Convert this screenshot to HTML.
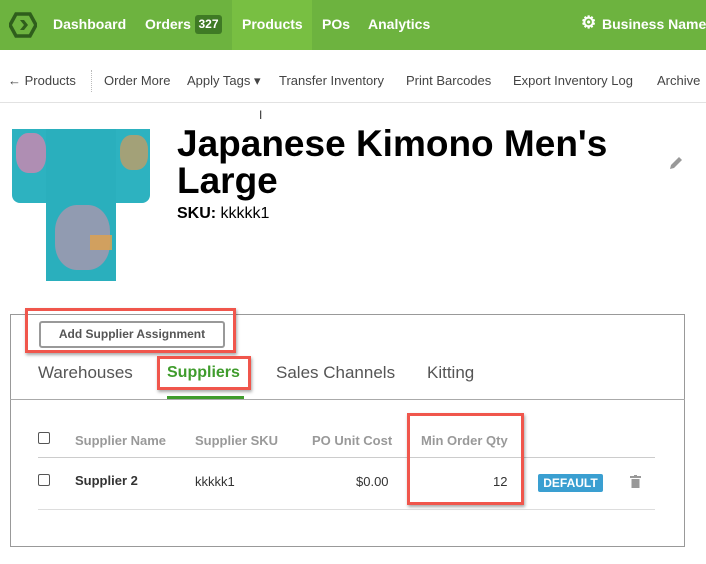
<!DOCTYPE html>
<html><head><style>
*{margin:0;padding:0;box-sizing:border-box}
body{width:706px;height:564px;overflow:hidden;background:#fff;font-family:"Liberation Sans",Arial,sans-serif;position:relative;color:#333}
.a{position:absolute;white-space:nowrap}
.nav{position:absolute;left:0;top:0;width:706px;height:50px;background:#6db33f}
.nv{position:absolute;top:16px;color:#fff;font-weight:bold;font-size:14px;white-space:nowrap}
.sub{position:absolute;top:73px;font-size:13px;color:#444;white-space:nowrap}
.red{position:absolute;border:3px solid #f0564c;box-shadow:1px 2px 3px rgba(0,0,0,.35)}
.th{position:absolute;top:433px;font-size:13px;font-weight:bold;color:#999;white-space:nowrap}
.cb{position:absolute;width:12px;height:12px;border:1px solid #555;border-radius:2px;background:#fff}
</style></head><body>
<div class="nav"></div>
<div class="a" style="left:232px;top:0;width:80px;height:50px;background:#78bf42"></div>
<svg class="a" style="left:9px;top:12px" width="28" height="26" viewBox="0 0 28 26"><polygon points="7,2 21,2 27,13 21,24 7,24 1,13" fill="none" stroke="#2f5e1c" stroke-width="3.5"/><polygon points="11,8 15,8 19,13 15,18 11,18 15,13" fill="#2f5e1c"/></svg>
<div class="nv" style="left:53px">Dashboard</div>
<div class="nv" style="left:145px">Orders</div>
<div class="a" style="left:195px;top:15px;width:27px;height:19px;background:#3f7a25;border-radius:3px;color:#fff;font-weight:bold;font-size:12px;text-align:center;line-height:19px">327</div>
<div class="nv" style="left:242px">Products</div>
<div class="nv" style="left:322px">POs</div>
<div class="nv" style="left:368px">Analytics</div>
<div class="nv" style="left:581px;font-size:17px;top:13px">⚙</div>
<div class="nv" style="left:602px">Business Name</div>

<div class="sub" style="left:8px">← Products</div>
<div class="a" style="left:91px;top:70px;height:22px;border-left:1px dotted #bbb"></div>
<div class="sub" style="left:104px">Order More</div>
<div class="sub" style="left:187px">Apply Tags ▾</div>
<div class="sub" style="left:279px">Transfer Inventory</div>
<div class="sub" style="left:406px">Print Barcodes</div>
<div class="sub" style="left:513px">Export Inventory Log</div>
<div class="sub" style="left:657px">Archive</div>
<div class="a" style="left:0;top:102px;width:706px;height:1px;background:#e2e2e2"></div>
<div class="a" style="left:259px;top:108px;font-size:12px;color:#333">I</div>

<!-- kimono -->
<div class="a" style="left:12px;top:129px;width:138px;height:74px;background:#2db2c0;border-radius:0 0 8px 8px"></div>
<div class="a" style="left:46px;top:129px;width:70px;height:152px;background:#2aafbd"></div>
<div class="a" style="left:16px;top:133px;width:30px;height:40px;background:#e77fae;opacity:.7;border-radius:40%"></div>
<div class="a" style="left:120px;top:135px;width:28px;height:35px;background:#d59a5a;opacity:.7;border-radius:40%"></div>
<div class="a" style="left:55px;top:205px;width:55px;height:65px;background:#e58aa8;opacity:.55;border-radius:40%"></div>
<div class="a" style="left:90px;top:235px;width:22px;height:15px;background:#e1a14b;opacity:.8"></div>

<div class="a" style="left:177px;top:125px;font-size:37px;font-weight:bold;color:#000;line-height:37px">Japanese Kimono Men's<br>Large</div>
<div class="a" style="left:177px;top:205px;font-size:16px;color:#000"><b>SKU:</b> kkkkk1</div>
<svg class="a" style="left:668px;top:155px" width="16" height="16" viewBox="0 0 16 16"><path d="M2 14 L3 10 L11 2 L14 5 L6 13 Z" fill="#999"/></svg>

<div class="a" style="left:10px;top:314px;width:675px;height:233px;border:1px solid #999"></div>
<div class="a" style="left:10px;top:399px;width:675px;height:1px;background:#aaa"></div>
<div class="a" style="left:39px;top:321px;width:186px;height:27px;border:2px solid #999;border-radius:3px;font-size:12px;font-weight:bold;color:#555;text-align:center;line-height:23px">Add Supplier Assignment</div>
<div class="red" style="left:25px;top:308px;width:211px;height:45px"></div>
<div class="a" style="left:38px;top:363px;font-size:17px;color:#555">Warehouses</div>
<div class="a" style="left:167px;top:364px;font-size:16px;font-weight:bold;color:#3f9c2c">Suppliers</div>
<div class="red" style="left:157px;top:356px;width:94px;height:34px"></div>
<div class="a" style="left:167px;top:396px;width:77px;height:3px;background:#3f9c2c"></div>
<div class="a" style="left:276px;top:363px;font-size:17px;color:#555">Sales Channels</div>
<div class="a" style="left:427px;top:363px;font-size:17px;color:#555">Kitting</div>

<div class="cb" style="left:38px;top:432px"></div>
<div class="th" style="left:75px">Supplier Name</div>
<div class="th" style="left:195px">Supplier SKU</div>
<div class="th" style="left:312px">PO Unit Cost</div>
<div class="th" style="left:421px">Min Order Qty</div>
<div class="a" style="left:38px;top:457px;width:617px;height:1px;background:#ccc"></div>
<div class="cb" style="left:38px;top:474px"></div>
<div class="a" style="left:75px;top:473px;font-size:13px;font-weight:bold;color:#333">Supplier 2</div>
<div class="a" style="left:195px;top:474px;font-size:13px;color:#333">kkkkk1</div>
<div class="a" style="left:356px;top:474px;font-size:13px;color:#333">$0.00</div>
<div class="a" style="left:493px;top:474px;font-size:13px;color:#333">12</div>
<div class="red" style="left:407px;top:413px;width:117px;height:92px"></div>
<div class="a" style="left:538px;top:474px;width:65px;height:18px;background:#3a9fd1;border-radius:2px;color:#fff;font-size:12px;font-weight:bold;text-align:center;line-height:18px">DEFAULT</div>
<svg class="a" style="left:630px;top:475px" width="11" height="13" viewBox="0 0 11 13"><rect x="0" y="1" width="11" height="2" fill="#999"/><rect x="4" y="0" width="3" height="2" fill="#999"/><rect x="1.5" y="4" width="8" height="9" fill="#999"/></svg>
<div class="a" style="left:38px;top:509px;width:617px;height:1px;background:#ddd"></div>
</body></html>
